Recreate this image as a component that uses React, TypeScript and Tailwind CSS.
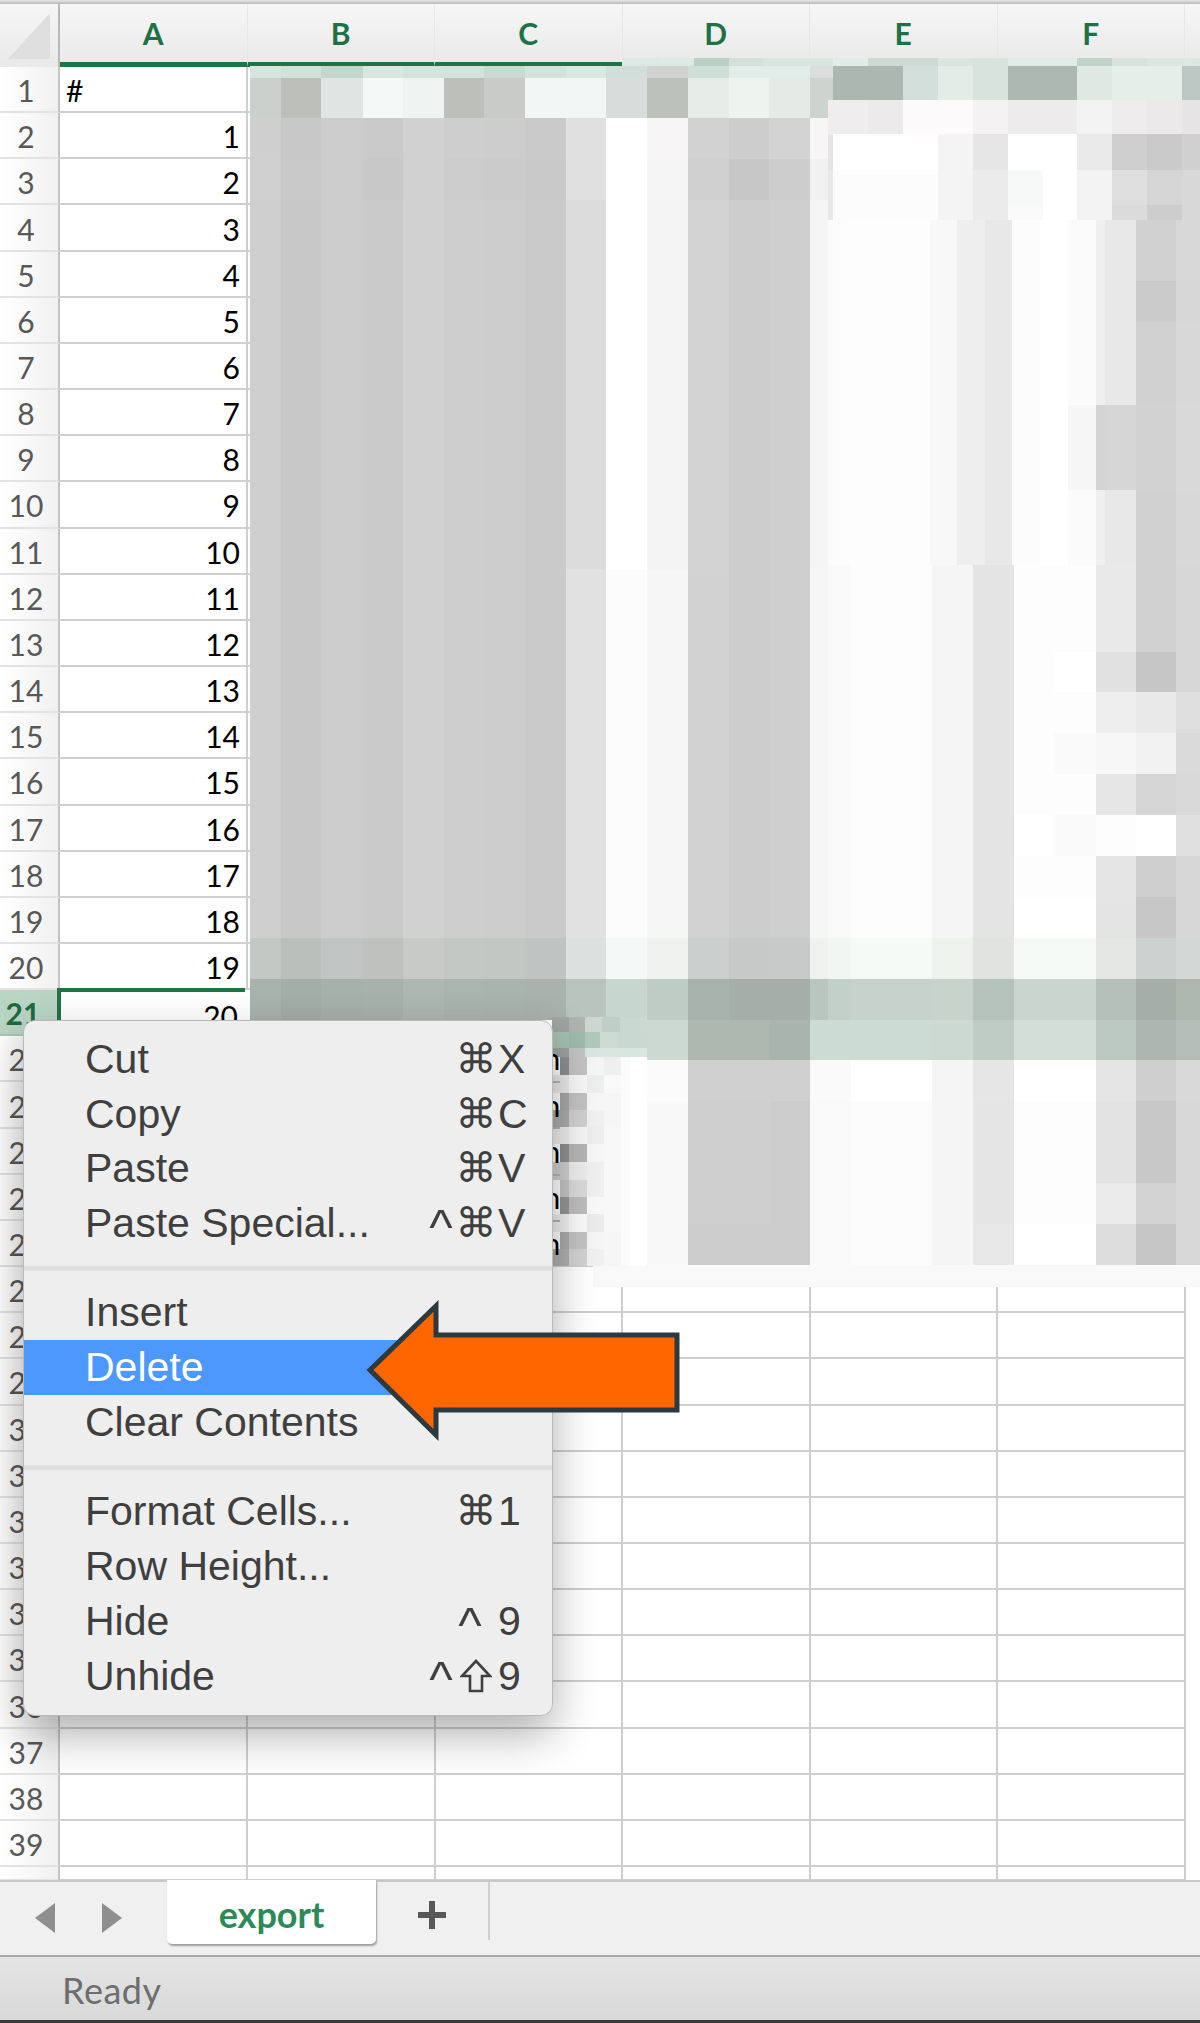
import type { ReactNode } from 'react'

type Band = [number, number, Array<[number, string]>]

const leftCols = [250, 281, 321, 363, 403, 444, 484, 525, 566, 606, 647, 688, 729, 769, 810, 828]

function row(colors: string[]): Array<[number, string]> {
  return colors.map((c, i) => [leftCols[i], c] as [number, string])
}

const baseGrey = ['#cfcfcf', '#c8c8c8', '#cccccc', '#cacaca', '#d1d1d1', '#cecece', '#cdcdcd', '#cacaca']

const lowerA: Array<[number, string]> = [[828, '#fcfcfc'], [847, '#fdfdfd'], [930, '#f8f8f8'], [957, '#eeeeee'], [985, '#e8e8e8'], [1012, '#fcfcfc'], [1040, '#ffffff'], [1068, '#fbfbfb'], [1096, '#efefef'], [1105, '#e8e8e8'], [1136, '#d1d1d1'], [1176, '#d8d8d8']]

function lowerB(c1096: string, c1136: string, c1176 = '#d7d7d7', c1014 = '#fdfdfd', c1054 = '#fdfdfd'): Array<[number, string]> {
  return [[828, '#f9f9f9'], [851, '#fdfdfd'], [932, '#f5f5f5'], [973, '#e4e4e4'], [1014, c1014], [1054, c1054], [1096, c1096], [1136, c1136], [1176, c1176]]
}

function smallCells(a: string, b: string, c: string, d: string, white = false): Array<[number, string]> {
  const first: Array<[number, string]> = white ? [[552, '#ffffff'], [560, a]] : [[552, a]]
  return [...first, [569, b], [587, c], [604, d], [621, '#fbfbfb'], [630, '#ffffff']]
}

const bands: Band[] = [
  // top strip under the column header
  [66, 78, row(['#d8e4de', '#d3e1d9', '#c5d6cc', '#dbe6e0', '#d6e3dc', '#d3e2da', '#c9dbd1', '#d4e2db', '#dbe7e1', '#d2ded9', '#d0d3d0', '#cfdfd8', '#e2ece8', '#e2ece8', '#dcdddd', '#dcdddd'])],
  [58, 66, [[622, '#dce8e3'], [660, '#dde9e4'], [694, '#b9d0c4'], [729, '#d4e0da'], [763, '#d9e5df'], [833, '#e1ece8'], [868, '#cbdbd3'], [938, '#dae5e0'], [973, '#d7e3dc'], [1008, '#e0eae6'], [1077, '#bfd3c9'], [1112, '#d8e3dd'], [1147, '#dce7e2']]],
  [78, 118, row(['#ccd0cc', '#bcbfba', '#e0e4e2', '#f4f8f6', '#eff3f1', '#bcbfba', '#c8cbc8', '#f2f6f4', '#f2f6f4', '#d8dddb', '#bcc1bc', '#e7ece8', '#edf3ee', '#e4ebe6', '#cdd4d0', '#cdd4d0'])],
  [118, 159, row([...baseGrey, '#e0e0e0', '#ffffff', '#f7f5f6', '#d3d2d3', '#cecdce', '#d3d3d3', '#f7f5f6', '#f4f4f4'])],
  [159, 200, row(['#cfd0cf', '#c8c9c8', '#cccccc', '#c8c8c8', '#d1d1d1', '#cccccc', '#cbcbcb', '#c9c9c9', '#e0e0e0', '#ffffff', '#f5f5f5', '#cfd0cf', '#c6c7c6', '#cccdcc', '#f1f1f1', '#f4f4f4'])],
  [200, 569, row([...baseGrey, '#dcdcdc', '#ffffff', '#f4f4f4', '#d3d3d3', '#cdcdcd', '#cfcfcf', '#f5f5f5', '#f4f4f4'])],
  [569, 938, row([...baseGrey, '#e1e1e1', '#fcfcfc', '#f6f6f6', '#d2d2d2', '#cdcdcd', '#cfcfcf', '#f6f6f6', '#f5f5f5'])],
  [938, 979, row(['#c4c8c5', '#bbbfbc', '#c0c4c2', '#bec1bd', '#c7cac6', '#c4c8c5', '#c3c7c3', '#bfc3c1', '#dce0df', '#f4f8f7', '#eff2ee', '#cbcfcd', '#c7c9c8', '#c8cac9', '#eff2ee', '#f2f6f3'])],
  [979, 1020, row(['#a9b3ad', '#a4aea8', '#a7b1ab', '#a8b2ac', '#aeb8b2', '#abb5af', '#aab4ae', '#a9b2ac', '#b8c4bd', '#c7d7d0', '#bfcbc5', '#a9b3ae', '#a5aea9', '#a5aea9', '#b9c5bf', '#c3cfc9'])],

  // right part of the blurred area, top rows
  [66, 100, [[833, '#adb7b2'], [903, '#d3dfda'], [938, '#e3ece7'], [973, '#d9e3de'], [1008, '#aeb8b2'], [1077, '#dfe8e3'], [1112, '#e6eee9'], [1182, '#bcc6c2']]],
  [100, 134, [[828, '#efedee'], [868, '#eceaeb'], [903, '#fcfafa'], [973, '#f4f2f3'], [1008, '#edebec'], [1077, '#f3f3f3'], [1112, '#eeeced'], [1147, '#ebe9ea'], [1182, '#e6e4e5']]],
  [134, 170, [[828, '#e5e5e5'], [833, '#ffffff'], [938, '#f4f4f4'], [973, '#e6e6e6'], [1008, '#ffffff'], [1077, '#eaeaea'], [1112, '#cfcfcf'], [1147, '#cacaca'], [1182, '#d0d0d0']]],
  [170, 205, [[828, '#e8e8e8'], [833, '#fcfcfc'], [938, '#f4f4f4'], [973, '#ebebeb'], [1008, '#f7f8f8'], [1043, '#ffffff'], [1077, '#f3f3f3'], [1112, '#dedede'], [1147, '#d5d5d5'], [1182, '#d8d8d8']]],
  [205, 220, [[828, '#e8e8e8'], [833, '#fcfcfc'], [938, '#f4f4f4'], [973, '#ebebeb'], [1008, '#f9f9f9'], [1043, '#ffffff'], [1077, '#f3f3f3'], [1112, '#dbdbdb'], [1147, '#cdcdcd'], [1182, '#d8d8d8']]],
  [220, 565, lowerA],
  [405, 490, [[1068, '#f6f6f6'], [1096, '#d4d4d4'], [1105, '#d6d6d6'], [1136, '#d2d2d2'], [1176, '#d9d9d9']]],
  [281, 322, [[1136, '#cbcbcb'], [1176, '#d7d7d7']]],
  [565, 652, lowerB('#e9e9e9', '#d1d1d1')],
  [652, 692, lowerB('#e1e1e1', '#c6c6c6', '#d7d7d7', '#fdfdfd', '#ffffff')],
  [692, 733, lowerB('#eeeeee', '#e9e9e9', '#dedede')],
  [733, 774, lowerB('#f7f7f7', '#f2f2f2', '#dadada', '#fdfdfd', '#fafafa')],
  [774, 815, lowerB('#e6e6e6', '#d5d5d5', '#d9d9d9')],
  [815, 856, lowerB('#fdfdfd', '#ffffff', '#e0e0e0', '#ffffff', '#fafafa')],
  [856, 897, lowerB('#e5e5e5', '#cfcfcf')],
  [897, 938, lowerB('#e4e4e4', '#c7c7c7', '#d7d7d7', '#ffffff', '#ffffff')],
  [938, 979, [[851, '#f5faf6'], [932, '#edf2ed'], [973, '#e0e3e0'], [1014, '#f6faf6'], [1096, '#e4e7e4'], [1136, '#ccd2d0'], [1176, '#d3d8d6']]],
  [979, 1020, [[851, '#c7d2cd'], [932, '#c8d3cc'], [973, '#b6c3bc'], [1014, '#cad5cf'], [1096, '#b5c0ba'], [1136, '#a5aea9'], [1176, '#afb8af']]],

  // rows below the highlighted one
  [1020, 1060, [[600, '#ccdad4'], [647, '#ccd8d2'], [688, '#afb8b0'], [769, '#a9b4ae'], [810, '#ccdbd4'], [932, '#ccd9d2'], [973, '#bfccc6'], [1014, '#d3ded8'], [1096, '#bcc8c2'], [1136, '#adb6b0'], [1176, '#b4bdb7']]],
  [1060, 1101, [[630, '#ffffff'], [647, '#fbfbfb'], [688, '#d0d0d0'], [810, '#fafafa'], [851, '#ffffff'], [932, '#f5f5f5'], [973, '#e6e6e6'], [1014, '#ffffff'], [1096, '#e5e5e5'], [1136, '#cfcfcf'], [1176, '#d9d9d9']]],
  [1101, 1183, [[630, '#fdfdfd'], [647, '#f8f8f8'], [688, '#cfcfcf'], [770, '#cccccc'], [810, '#f9f9f9'], [851, '#fcfcfc'], [932, '#f5f5f5'], [973, '#e5e5e5'], [1014, '#fdfdfd'], [1096, '#e3e3e3'], [1136, '#c8c8c8'], [1176, '#d8d8d8']]],
  [1183, 1224, [[630, '#fdfdfd'], [647, '#f8f8f8'], [688, '#cfcfcf'], [770, '#cccccc'], [810, '#f9f9f9'], [851, '#fcfcfc'], [932, '#f5f5f5'], [973, '#e5e5e5'], [1014, '#fdfdfd'], [1096, '#ebebeb'], [1136, '#d3d3d3'], [1176, '#d8d8d8']]],
  [1224, 1265, [[630, '#fdfdfd'], [647, '#f8f8f8'], [688, '#cccccc'], [810, '#f9f9f9'], [851, '#fcfcfc'], [932, '#f5f5f5'], [973, '#e7e7e7'], [1014, '#ffffff'], [1096, '#dddddd'], [1136, '#c6c6c6'], [1176, '#d8d8d8']]],
  [1265, 1287, [[593, '#f9f9f9']]],

  // small squares right beside the menu
  [1017, 1032, [[552, '#9fa5a2'], [569, '#b0b5b2'], [585, '#cdd6d1'], [602, '#bfcec7'], [620, '#c8d9d2'], [640, '#ccd8d2']]],
  [1032, 1048, [[552, '#a5c0b0'], [569, '#9dbcac'], [585, '#b0c8ba'], [600, '#cddad4'], [617, '#c8d9d2']]],
  [1048, 1057, [[552, '#9ea3a0'], [569, '#c0c4c2'], [585, '#d9e5e0']]],
  [1057, 1075, smallCells('#8f8f8f', '#c4c2c3', '#f4f6f6', '#eeefef', true)],
  [1075, 1093, smallCells('#eaeaea', '#f8f8f8', '#eeeeee', '#f9f9f9')],
  [1093, 1110, smallCells('#a8a8a8', '#c2c2c2', '#f6f6f6', '#f6f6f6', true)],
  [1110, 1127, smallCells('#acacac', '#d0d0d0', '#f0f0f0', '#f6f6f6')],
  [1127, 1144, smallCells('#eeeeee', '#f6f6f6', '#eeeeee', '#f8f8f8')],
  [1144, 1162, smallCells('#909090', '#b5b5b5', '#f6f6f6', '#f8f8f8', true)],
  [1162, 1180, smallCells('#cfcfcf', '#ececec', '#efefef', '#f8f8f8')],
  [1180, 1197, smallCells('#c4c4c4', '#dadada', '#efefef', '#f8f8f8', true)],
  [1197, 1214, smallCells('#959595', '#bdbdbd', '#f8f8f8', '#f8f8f8', true)],
  [1214, 1232, smallCells('#f0f0f0', '#fafafa', '#ebebeb', '#f8f8f8')],
  [1232, 1249, smallCells('#acacac', '#c2c2c2', '#f5f5f5', '#f6f6f6', true)],
  [1249, 1266, smallCells('#b0b0b0', '#d2d2d2', '#f0f0f0', '#f6f6f6')],
]

// where a band ends on the right: the left grid bands stop at the grid they belong to
function bandEnd(band: Band, i: number) {
  const cells = band[2]
  if (i + 1 < cells.length) return cells[i + 1][0]
  if (cells[0][0] === 250) return band[0] >= 938 ? 851 : 833
  if (cells[0][0] === 552) return 647
  if (band[0] === 1017 || band[0] === 1032 || band[0] === 1048) return 647
  return 1200
}

function Mosaic() {
  return (
    <svg className="absolute left-0 top-0 z-[1]" width={1200} height={1300} shapeRendering="crispEdges">
      {bands.map((band, b) =>
        band[2].map((cell, i) => (
          <rect key={b + '-' + i} x={cell[0]} y={band[0]} width={bandEnd(band, i) - cell[0]} height={band[1] - band[0]} fill={cell[1]} />
        ))
      )}
      {[1081, 1127, 1174, 1220].map((y) => (
        <rect key={y} x={552} y={y} width={8} height={2} fill="#b5b5b5" />
      ))}
    </svg>
  )
}

const columns = ['A', 'B', 'C', 'D', 'E', 'F']
const rowNumbers = Array.from({ length: 39 }, (_, i) => i + 1)

function GridRow({ n, short }: { n?: number; short?: boolean }) {
  const selected = n === 21
  const value = n === undefined || n > 21 ? null : n === 1 ? '#' : n - 1
  return (
    <div className={'flex shrink-0 ' + (short ? 'h-[14px]' : 'h-[46.17px]')}>
      <div
        className={
          selected
            ? 'w-[60px] shrink-0 pr-[14px] pt-[2px] flex items-center justify-center bg-[#b9d5c4] border-b-2 border-[#a8c8b4] text-[#1d6b3f] font-bold'
            : 'w-[60px] shrink-0 pr-[6px] pt-[2px] flex items-center justify-center bg-gradient-to-r from-white to-[#f1f1f1] border-r-2 border-b-2 border-r-[#c4c4c4] border-b-[#e2e2e2] text-[#585858]'
        }
      >
        {n}
      </div>
      <div
        className={
          selected
            ? 'w-[188px] shrink-0 relative -ml-[3px] -mt-[2px] pt-[4px] border-l-4 border-t-4 border-[#217346] bg-white flex items-center justify-end pr-[7px] text-black'
            : 'w-[188px] shrink-0 pt-[2px] border-r-2 border-b-2 border-[#cfcfcf] bg-white flex items-center text-black ' + (n === 1 ? 'justify-start pl-[6px]' : 'justify-end pr-[6px]')
        }
      >
        {value}
      </div>
      {[0, 1, 2, 3, 4].map((c) => (
        <div key={c} className="w-[187.5px] shrink-0 border-r-2 border-b-2 border-[#cfcfcf] bg-white flex items-center">
          {c === 1 && n !== undefined && n >= 22 && n <= 26 ? <span className="relative z-[5] ml-[108px] text-black">n</span> : null}
        </div>
      ))}
    </div>
  )
}

function Keys({ caret, symbol, letter }: { caret?: boolean; symbol?: ReactNode; letter: string }) {
  return (
    <div className="flex items-center">
      {caret ? <span className="w-[24px] text-center text-[50px] leading-none translate-y-[3px]">^</span> : null}
      {symbol ? (
        <span className="w-[34px] ml-[6px] flex items-center justify-center text-[41px] font-['DejaVu_Sans',sans-serif]">{symbol}</span>
      ) : (
        <span className="w-[11px]" />
      )}
      <span className="w-[26px] ml-[5px] text-left">{letter}</span>
    </div>
  )
}

function ShiftIcon() {
  return (
    <svg width={32} height={34} viewBox="0 0 32 34">
      <path d="M16 2 L30 17 H22 V32 H10 V17 H2 Z" fill="none" stroke="#3f3f3f" strokeWidth={2.6} strokeLinejoin="miter" />
    </svg>
  )
}

function MenuItem({ label, keys, active }: { label: string; keys?: ReactNode; active?: boolean }) {
  return (
    <div className={'h-[54.8px] pl-[61px] pr-[28px] flex items-center justify-between ' + (active ? 'bg-[#4c98fd] text-white' : '')}>
      <span>{label}</span>
      {keys}
    </div>
  )
}

function ContextMenu() {
  return (
    <div className="absolute left-[23px] top-[1020px] z-20 w-[530px] h-[696px] pt-[11px] rounded-[12px] border border-[#b9b9b9] bg-[#eeeeee] text-[#3f3f3f] text-[41px] leading-none font-['Liberation_Sans',sans-serif] shadow-[0_18px_45px_rgba(0,0,0,0.32)]">
      <MenuItem label="Cut" keys={<Keys symbol="⌘" letter="X" />} />
      <MenuItem label="Copy" keys={<Keys symbol="⌘" letter="C" />} />
      <MenuItem label="Paste" keys={<Keys symbol="⌘" letter="V" />} />
      <MenuItem label="Paste Special..." keys={<Keys caret symbol="⌘" letter="V" />} />
      <div className="h-[5px] mt-[15px] mb-[14px] bg-[#e0e0e0]" />
      <MenuItem label="Insert" />
      <MenuItem label="Delete" active />
      <MenuItem label="Clear Contents" />
      <div className="h-[5px] mt-[15px] mb-[15px] bg-[#e0e0e0]" />
      <MenuItem label="Format Cells..." keys={<Keys symbol="⌘" letter="1" />} />
      <MenuItem label="Row Height..." />
      <MenuItem label="Hide" keys={<Keys caret letter="9" />} />
      <MenuItem label="Unhide" keys={<Keys caret symbol={<ShiftIcon />} letter="9" />} />
    </div>
  )
}

function OrangeArrow() {
  return (
    <svg className="absolute left-[360px] top-[1290px] z-30" width={325} height={160} viewBox="360 1290 325 160">
      <polygon
        points="370,1370 436,1306 436,1335 677,1335 677,1410 436,1410 436,1435"
        fill="#ff6600"
        stroke="#2b3a3f"
        strokeWidth={5}
        strokeMiterlimit={8}
      />
    </svg>
  )
}

export default function App() {
  return (
    <div className="relative w-[1200px] h-[2023px] overflow-hidden flex flex-col bg-white text-[30px] leading-none font-['Lato',sans-serif]">
      <div className="h-[4px] shrink-0 bg-gradient-to-b from-[#e8e8e8] to-[#b8b8b8]" />

      <div className="h-[63px] shrink-0 flex bg-gradient-to-b from-[#f6f6f6] to-[#e9e9e9]">
        <div className="w-[60px] shrink-0 flex items-center justify-center border-r-2 border-[#b8b8b8]">
          <svg width={46} height={50} viewBox="0 0 46 50">
            <polygon points="44,2 44,48 2,48" fill="#dedede" />
          </svg>
        </div>
        {columns.map((c, i) => (
          <div
            key={c}
            className={
              'w-[187.5px] shrink-0 flex items-center justify-center border-r border-[#e7e7e7] text-[#1e7145] font-bold ' +
              (i < 3 ? 'border-b-[5px] border-b-[#217346]' : 'pb-[5px]')
            }
          >
            {c}
          </div>
        ))}
      </div>

      <div className="flex-1 min-h-0 overflow-hidden flex flex-col">
        {rowNumbers.map((n) => (
          <GridRow key={n} n={n} />
        ))}
        <GridRow short />
      </div>

      <div className="h-[75px] shrink-0 relative z-10 flex items-start bg-[#f0f0f0] border-t-2 border-[#c8c8c8]">
        <div className="w-[167px] h-[72px] shrink-0 pl-[35px] flex items-center gap-[47px]">
          <svg width={20} height={30} viewBox="0 0 20 30">
            <polygon points="20,0 20,30 0,15" fill="#8f8f8f" />
          </svg>
          <svg width={20} height={30} viewBox="0 0 20 30">
            <polygon points="0,0 0,30 20,15" fill="#8f8f8f" />
          </svg>
        </div>
        <div className="w-[209px] h-[64px] shrink-0 -mt-[2px] pt-[4px] flex items-center justify-center rounded-b-[5px] bg-white text-[#2b8a57] text-[36px] font-bold shadow-[1px_2px_2px_rgba(0,0,0,0.35)]">
          export
        </div>
        <div className="w-[114px] h-[58px] shrink-0 pt-[8px] flex items-center justify-center border-r-2 border-[#cfcfcf]">
          <svg width={30} height={30} viewBox="0 0 30 30">
            <path d="M15 1v28M1 15h28" stroke="#585858" strokeWidth={6} fill="none" />
          </svg>
        </div>
      </div>

      <div className="h-[68px] shrink-0 pl-[62px] pt-[2px] flex items-center bg-gradient-to-b from-[#e4e4e4] to-[#d9d9d9] border-t-2 border-b-[3px] border-t-[#a8a8a8] border-b-[#3a3a3a] text-[#6e6e6e] text-[36px] tracking-[0.5px]">
        Ready
      </div>

      <Mosaic />
      <ContextMenu />
      <OrangeArrow />
    </div>
  )
}
